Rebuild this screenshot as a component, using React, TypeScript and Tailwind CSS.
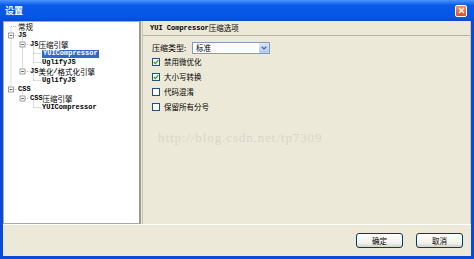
const cjk = "font-['Noto_Sans_CJK_SC',sans-serif]";
const mono = "font-['Liberation_Mono','Noto_Sans_CJK_SC',monospace]";

// split latin / chinese so each part gets its own size
function Mixed({ text, latin = "text-[7px]", han = "text-[7.5px]" }: { text: string; latin?: string; han?: string }) {
  const parts = text.split(/([\u4e00-\u9fff]+)/).filter(Boolean);
  return (
    <>
      {parts.map((p, i) =>
        /[\u4e00-\u9fff]/.test(p) ? (
          <span key={i} className={`${cjk} ${han}`}>{p}</span>
        ) : (
          <span key={i} className={`${mono} ${latin} font-bold`}>{p}</span>
        )
      )}
    </>
  );
}

type Node = { label: string; level: number; selected?: boolean };

const nodes: Node[] = [
  { label: "常规", level: 0 },
  { label: "JS", level: 0 },
  { label: "JS压缩引擎", level: 1 },
  { label: "YUICompressor", level: 2, selected: true },
  { label: "UglifyJS", level: 2 },
  { label: "JS美化/格式化引擎", level: 1 },
  { label: "UglifyJS", level: 2 },
  { label: "CSS", level: 0 },
  { label: "CSS压缩引擎", level: 1 },
  { label: "YUICompressor", level: 2 },
];

const indent = ["pl-[14px]", "pl-[26px]", "pl-[38px]"];

function TreeLines() {
  const cy = (i: number) => 4.5 + 9 * i;
  const box = (x: number, i: number) => (
    <g key={`b${i}`}>
      <rect x={x - 2.5} y={cy(i) - 2.5} width={5} height={5} fill="#fff" stroke="#8a8a8a" strokeWidth={0.8} />
      <line x1={x - 1.3} y1={cy(i)} x2={x + 1.3} y2={cy(i)} stroke="#333" strokeWidth={0.8} />
    </g>
  );
  const s = { stroke: "#a8a8a8", strokeWidth: 0.8, strokeDasharray: "1 1" };
  return (
    <svg className="absolute left-0 top-0" width={134} height={200}>
      <line x1={7} y1={cy(0)} x2={7} y2={cy(7) - 2.5} {...s} />
      <line x1={7} y1={cy(0)} x2={13} y2={cy(0)} {...s} />
      <line x1={18.5} y1={cy(1)} x2={18.5} y2={cy(5) - 2.5} {...s} />
      <line x1={9.5} y1={cy(1)} x2={13} y2={cy(1)} {...s} />
      <line x1={18.5} y1={cy(7)} x2={18.5} y2={cy(8) - 2.5} {...s} />
      <line x1={9.5} y1={cy(7)} x2={13} y2={cy(7)} {...s} />
      <line x1={29.5} y1={cy(2)} x2={29.5} y2={cy(4)} {...s} />
      <line x1={29.5} y1={cy(3)} x2={37} y2={cy(3)} {...s} />
      <line x1={29.5} y1={cy(4)} x2={37} y2={cy(4)} {...s} />
      <line x1={29.5} y1={cy(5)} x2={29.5} y2={cy(6)} {...s} />
      <line x1={29.5} y1={cy(6)} x2={37} y2={cy(6)} {...s} />
      <line x1={29.5} y1={cy(8)} x2={29.5} y2={cy(9)} {...s} />
      <line x1={29.5} y1={cy(9)} x2={37} y2={cy(9)} {...s} />
      {[2, 5, 8].map((i) => (
        <line key={`h${i}`} x1={21} y1={cy(i)} x2={25} y2={cy(i)} {...s} />
      ))}
      {[1, 7].map((i) => box(7, i))}
      {[2, 5, 8].map((i) => box(18.5, i))}
    </svg>
  );
}

function Checkbox({ checked }: { checked?: boolean }) {
  return (
    <span className="w-[8px] h-[8px] border border-[#1c5180] bg-white flex items-center justify-center">
      {checked && (
        <svg width="6" height="6" viewBox="0 0 6 6">
          <path d="M0.8 3 L2.4 4.6 L5.3 1.2" fill="none" stroke="#21a121" strokeWidth="1.3" />
        </svg>
      )}
    </span>
  );
}

function XpButton({ label }: { label: string }) {
  return (
    <button className="w-[47px] h-[15px] rounded-[3px] border border-[#003c74] bg-[linear-gradient(#ffffff,#f2f1ea_70%,#d6d0c5)] flex items-center justify-center">
      <span className={`${cjk} text-[7.5px] text-black leading-none`}>{label}</span>
    </button>
  );
}

export default function App() {
  return (
    <div className="w-[474px] h-[259px] flex flex-col bg-[#0a4ad6] overflow-hidden">
      {/* title bar */}
      <div className="h-[21px] flex items-center justify-between pl-[5px] pr-[7px] bg-[linear-gradient(#4a95ff,#0a5ae8_25%,#0556e6_80%,#0a4ad6)]">
        <span className={`${cjk} text-[9px] font-bold text-white`}>设置</span>
        <span className="w-[12px] h-[12px] rounded-[2px] border border-white bg-[linear-gradient(#f0916c,#dd4f25)] flex items-center justify-center">
          <svg width="7" height="7" viewBox="0 0 7 7">
            <path d="M1 1 L6 6 M6 1 L1 6" stroke="#fff" strokeWidth="1.4" />
          </svg>
        </span>
      </div>

      <div className="flex-1 mx-[3px] mb-[3px] bg-[#ece9d8] flex flex-col">
        <div className="h-[203px] flex gap-px">
          {/* tree */}
          <div className="w-[138px] bg-white border border-[#a9a9a9] border-r-2 border-r-[#9b9b93]">
            <div className="relative">
              <TreeLines />
              <div className="relative flex flex-col">
                {nodes.map((n, i) => (
                  <div key={i} className={`h-[9px] flex items-center ${indent[n.level]}`}>
                    <span
                      className={`h-[8px] flex items-center leading-none ${
                        n.selected ? "bg-[#316ac5] text-white px-[1px]" : "text-black"
                      }`}
                    >
                      <Mixed text={n.label} />
                    </span>
                  </div>
                ))}
              </div>
            </div>
          </div>

          {/* options */}
          <div className="flex-1 border-l border-r border-[#c9c6b8] flex flex-col">
            <div className="h-[15px] flex items-center pl-[7px] border-b border-[#b5b2a4] leading-none">
              <Mixed text="YUI Compressor压缩选项" />
            </div>
            <div className="pl-[9px] flex flex-col">
              <div className="mt-[6px] h-[12px] flex items-center">
                <span className={`${cjk} text-[8px] w-[40px] leading-none`}>压缩类型:</span>
                <div className="w-[78px] h-[12px] border border-[#7f9db9] bg-white flex items-center justify-between">
                  <span className={`${cjk} text-[7.5px] pl-[3px] leading-none`}>标准</span>
                  <span className="w-[10px] h-[10px] rounded-[1px] bg-[linear-gradient(#dbe6fd,#b2c8f5)] flex items-center justify-center">
                    <svg width="6" height="4" viewBox="0 0 6 4">
                      <path d="M0.7 0.8 L3 3 L5.3 0.8" fill="none" stroke="#4d6185" strokeWidth="1.2" />
                    </svg>
                  </span>
                </div>
              </div>
              {[
                ["禁用微优化", true],
                ["大小写转换", true],
                ["代码混淆", false],
                ["保留所有分号", false],
              ].map(([t, c]) => (
                <div key={t as string} className="h-[15px] flex items-center gap-[4px]">
                  <Checkbox checked={c as boolean} />
                  <span className={`${cjk} text-[7.5px] leading-none`}>{t as string}</span>
                </div>
              ))}
              <div className="mt-[16px] h-[14px] pl-[6px] flex items-center font-['Liberation_Serif',serif] text-[13px] tracking-[0.9px] leading-none text-[#dad5c8]">
                http://blog.csdn.net/tp7309
              </div>
            </div>
          </div>
        </div>

        {/* buttons */}
        <div className="flex-1 border-t border-white flex items-center justify-end gap-[13px] pr-[8px]">
          <XpButton label="确定" />
          <XpButton label="取消" />
        </div>
      </div>
    </div>
  );
}
